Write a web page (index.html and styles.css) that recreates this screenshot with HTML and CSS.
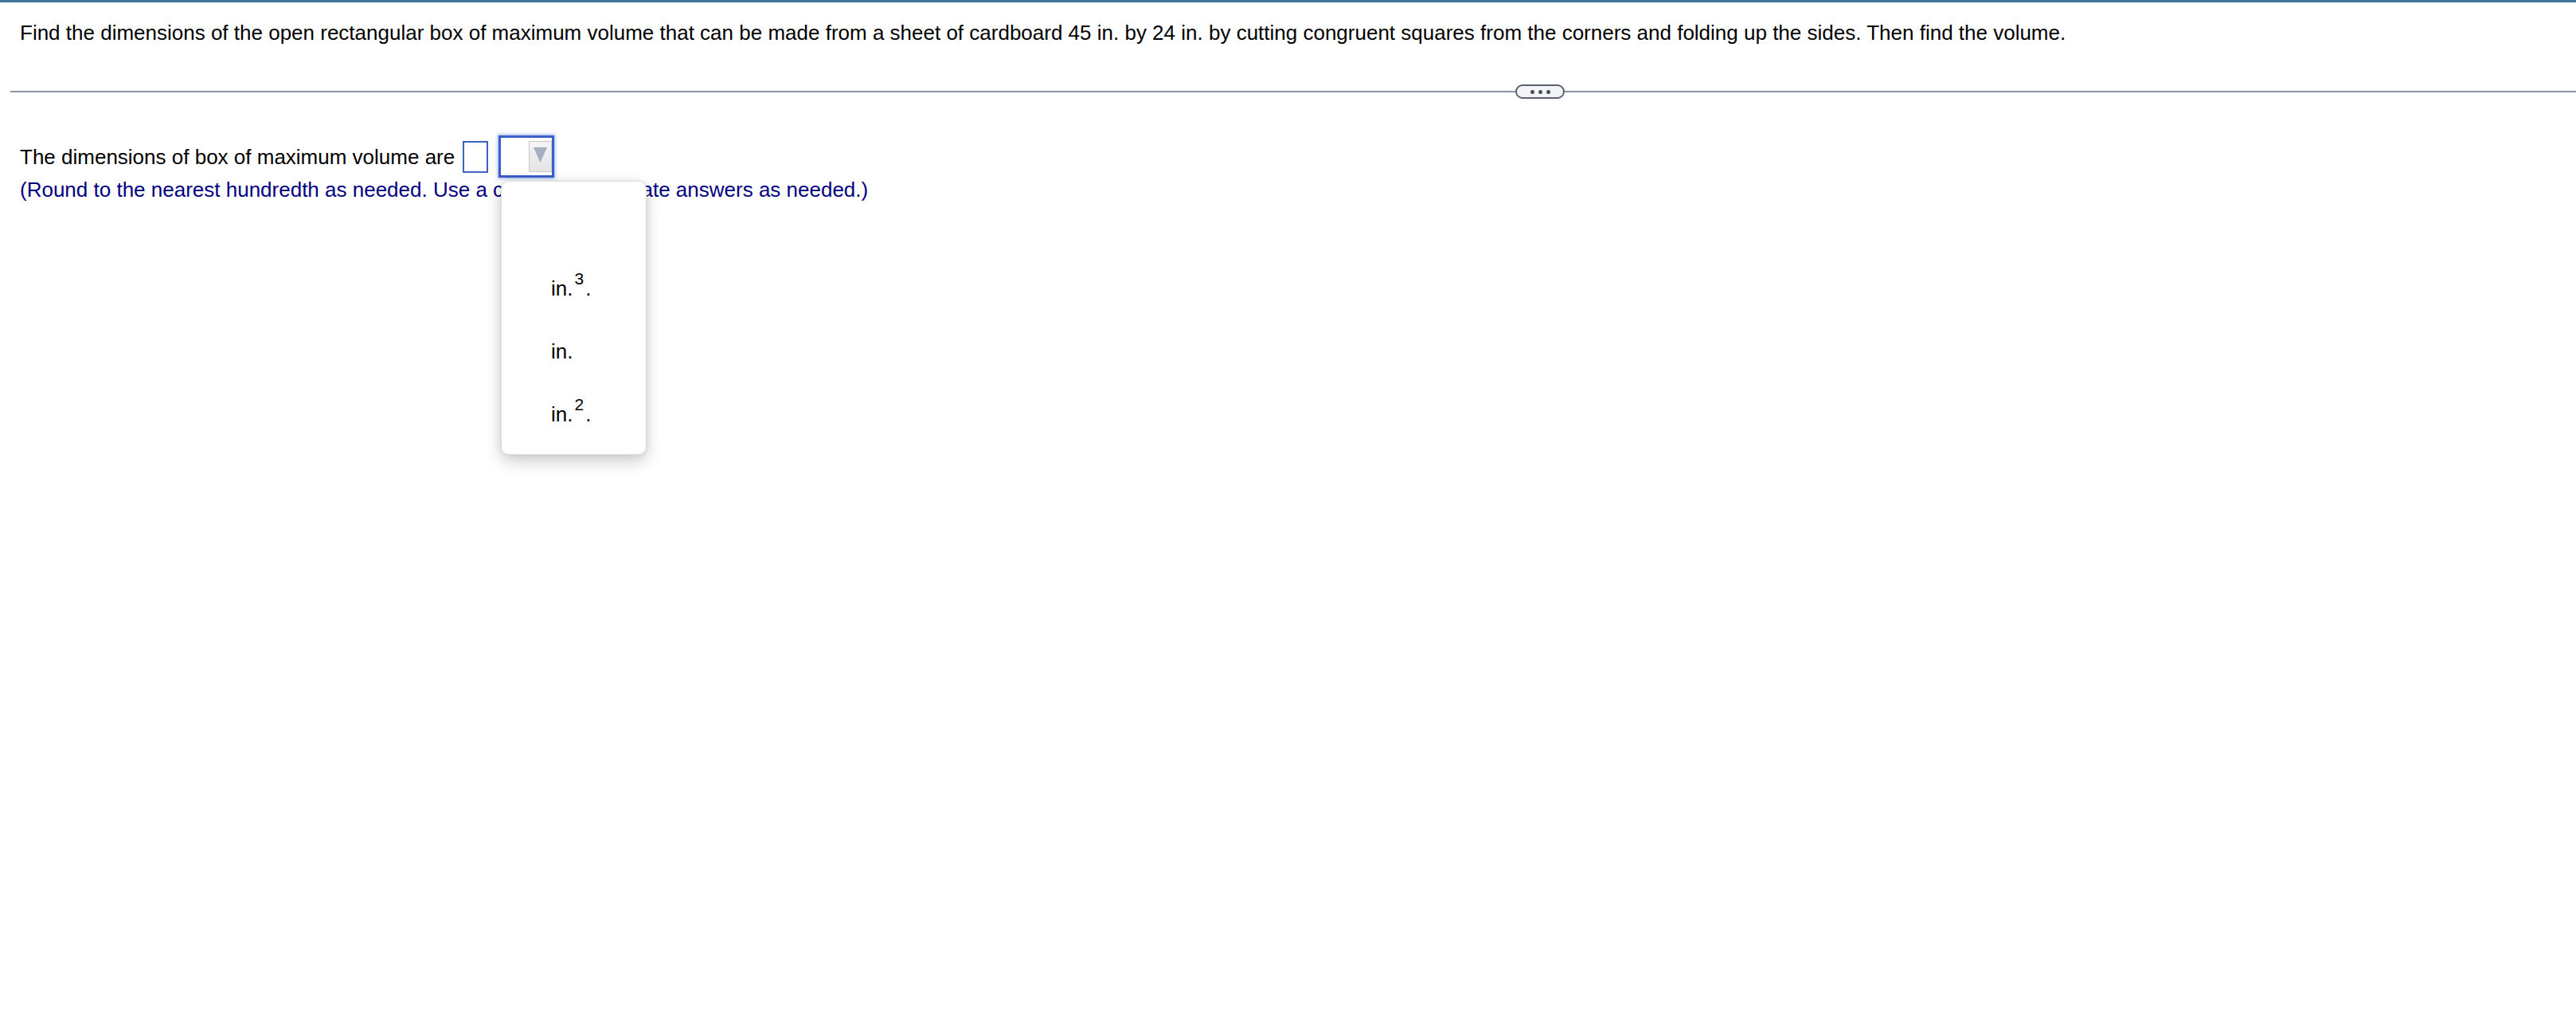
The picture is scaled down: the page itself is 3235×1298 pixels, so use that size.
FILE: index.html
```html
<!DOCTYPE html>
<html lang="en">
<head>
<meta charset="utf-8">
<title>Maximum volume box</title>
<link rel="stylesheet" href="styles.css">
</head>
<body>
<div class="topbar"></div>
<p class="question">Find the dimensions of the open rectangular box of maximum volume that can be made from a sheet of cardboard 45 in. by 24 in. by cutting congruent squares from the corners and folding up the sides. Then find the volume.</p>
<div class="divider">
  <span class="rule rule-left"></span>
  <span class="more"><span class="dot"></span><span class="dot"></span><span class="dot"></span></span>
  <span class="rule rule-right"></span>
</div>
<div class="answer">
  <div class="answer-row">
    <span class="answer-text">The dimensions of box of maximum volume are</span>
    <span class="input-box"></span>
    <span class="select">
      <span class="select-btn">
        <svg class="tri" width="17" height="19" viewBox="0 0 17 19"><polygon points="0,0 17,0 8.5,19" fill="#a6adbf"/></svg>
      </span>
    </span>
  </div>
  <p class="hint">(Round to the nearest hundredth as needed. Use a comma to separate answers as needed.)</p>
  <div class="menu">
    <div class="menu-item"></div>
    <div class="menu-item">in.<span class="exp">3</span>.</div>
    <div class="menu-item">in.</div>
    <div class="menu-item">in.<span class="exp">2</span>.</div>
  </div>
</div>
</body>
</html>
```
FILE: styles.css
```css
html, body {
  margin: 0;
  padding: 0;
  background: #ffffff;
}
html {
  height: 100%;
}
body {
  min-height: 100%;
  font-family: "Liberation Sans", Arial, sans-serif;
  font-size: 26px;
  color: #000000;
}
.topbar {
  height: 3px;
  background: #3e7499;
}
.question {
  margin: 0;
  padding: 23px 0 0 25px;
  line-height: 30px;
}
.divider {
  margin-top: 50px;
  height: 18px;
  display: flex;
  align-items: center;
  padding-left: 13px;
}
.rule {
  height: 2px;
  background: #8a93a3;
}
.rule-left {
  width: 1890px;
  flex: none;
}
.rule-right {
  flex: 1;
}
.more {
  box-sizing: border-box;
  width: 62px;
  height: 18px;
  border: 2px solid #5a616d;
  border-radius: 9px;
  background: #f3f4f6;
  display: flex;
  align-items: center;
  justify-content: center;
  gap: 5px;
  flex: none;
}
.dot {
  width: 5px;
  height: 5px;
  border-radius: 50%;
  background: #4b4f58;
}
.answer {
  position: relative;
  margin-top: 46px;
  padding-left: 25px;
}
.answer-row {
  display: flex;
  align-items: center;
  height: 53px;
  line-height: 30px;
}
.input-box {
  box-sizing: border-box;
  width: 32px;
  height: 40px;
  border: 2px solid #3d62c6;
  margin-left: 10px;
  background: #fff;
}
.select {
  box-sizing: border-box;
  width: 70px;
  height: 53px;
  margin-left: 13px;
  border: 3px solid #3b5fc8;
  box-shadow: 0 0 4px 1px rgba(70, 110, 220, 0.55);
  background: #fff;
  display: flex;
  justify-content: flex-end;
  align-items: flex-start;
  padding-top: 4px;
}
.select-btn {
  box-sizing: border-box;
  width: 29px;
  height: 39px;
  border: 1px solid #c6c6c6;
  border-right-color: #d8d8d8;
  background: linear-gradient(#f4f4f4, #e4e4e4);
  display: flex;
  justify-content: center;
  padding-top: 7px;
}
.tri {
  display: block;
}
.menu {
  position: absolute;
  top: 57px;
  left: 629px;
  z-index: 10;
  box-sizing: border-box;
  width: 183px;
  height: 344px;
  padding: 16px 0 0 62px;
  background: #fff;
  border: 1px solid #dcdcdc;
  border-radius: 10px;
  box-shadow: 0 8px 20px rgba(0, 0, 0, 0.2), 0 0 8px rgba(0, 0, 0, 0.07);
  color: #000;
}
.menu-item {
  height: 79px;
  line-height: 79px;
  white-space: nowrap;
}
.exp {
  font-size: 21px;
  line-height: 0;
  vertical-align: 14px;
  margin-left: 2px;
  margin-right: 2px;
}
.hint {
  margin: 0;
  line-height: 30px;
  color: #000080;
}
```
